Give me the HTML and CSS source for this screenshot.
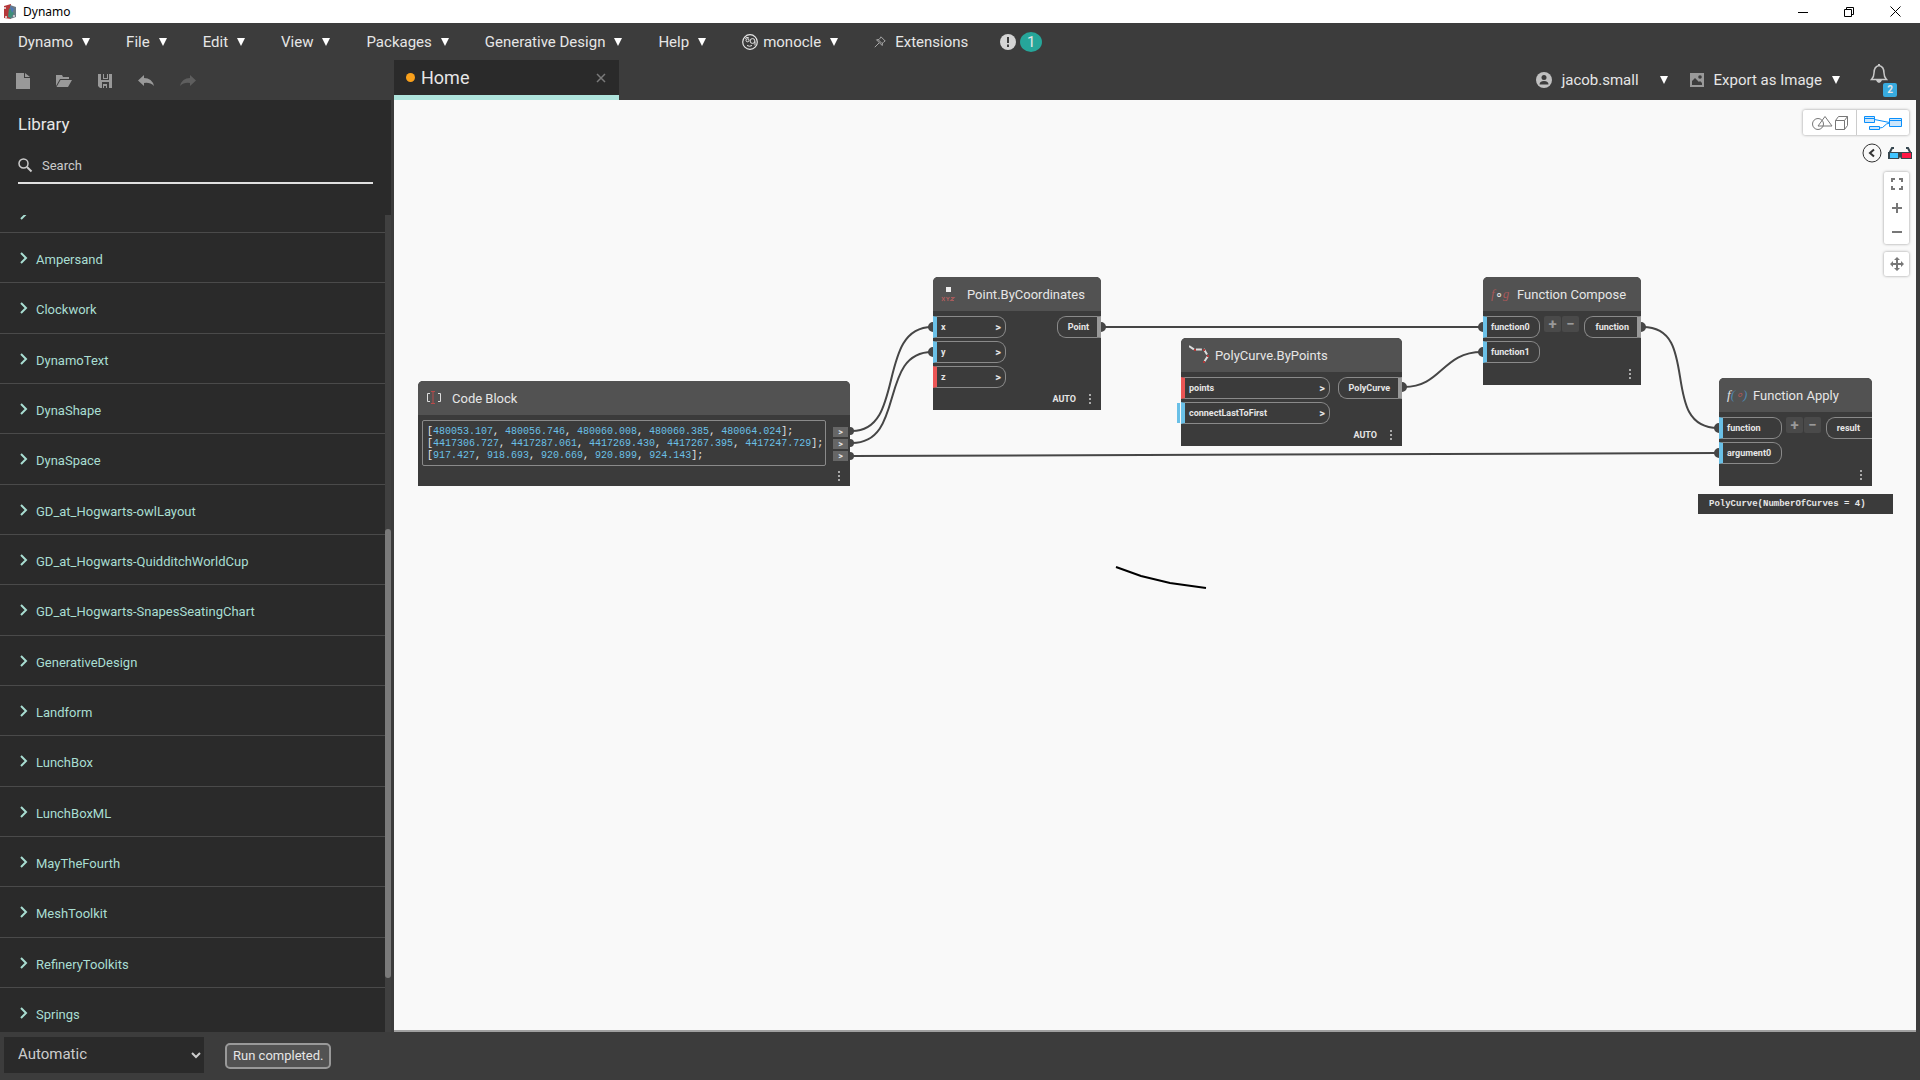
FILE: index.html
```html
<!DOCTYPE html>
<html lang="en">
<head>
  <meta charset="UTF-8">
  <meta name="viewport" content="width=device-width, initial-scale=1.0">
  <title>Dynamo</title>
  <link rel="stylesheet" href="styles.css">
</head>
<body>
  <header class="titlebar">
    <svg class="app-icon" width="14" height="18" viewBox="0 0 14 18">
      <path d="M1 3 8 1v15l-7-1z" fill="#b5383a"/>
      <path d="M7 2l6 2v10l-6 2z" fill="#6c7a86"/>
      <path d="M6 5l5 5-3 5-3-1z" fill="#3f8f7a"/>
      <path d="M7 3l4 3-2 4z" fill="#4b78b8"/>
      <circle cx="2" cy="5" r="1" fill="#eee"/>
      <circle cx="3" cy="14" r="1" fill="#eee"/>
      <circle cx="11" cy="13" r="1" fill="#ddd"/>
    </svg>
    <span class="app-name">Dynamo</span>
    <div class="window-buttons">
      <button aria-label="Minimize"><svg width="10" height="10"><path d="M0 5.5h10" stroke="#000"/></svg></button>
      <button aria-label="Restore"><svg width="10" height="10" fill="none" stroke="#000"><path d="M.5 2.500h7v7h-7zM2.500 2.500v-2h7v7h-2"/></svg></button>
      <button aria-label="Close"><svg width="11" height="11"><path d="M.5.5l10 10M10.500.5l-10 10" stroke="#000"/></svg></button>
    </div>
  </header>

  <nav class="menubar">
    <button class="menu">Dynamo <i class="arrow"></i></button>
    <button class="menu">File <i class="arrow"></i></button>
    <button class="menu">Edit <i class="arrow"></i></button>
    <button class="menu">View <i class="arrow"></i></button>
    <button class="menu">Packages <i class="arrow"></i></button>
    <button class="menu">Generative Design <i class="arrow"></i></button>
    <button class="menu">Help <i class="arrow"></i></button>
    <button class="menu with-icon">
      <svg width="16" height="16" viewBox="0 0 16 16" fill="none" stroke="#e6e6e6">
        <circle cx="8" cy="8" r="7.300" stroke-width="1.200"/>
        <circle cx="5.500" cy="6.300" r="1.500"/>
        <circle cx="10.500" cy="7" r="2.400"/>
        <path d="M3 4.500q2-2 4-.5M13 7.500v4M5 11.500q2.500 1.500 5 0"/>
      </svg>
      monocle <i class="arrow"></i>
    </button>
    <button class="menu extensions">
      <svg width="12" height="12" viewBox="0 0 12 12" fill="none" stroke="#b4b4b4" stroke-width=".9">
        <path d="M7 .8 11.200 5l-1.200.6-1.500 1.500-.3 2.400L2.500 3.800l2.400-.3L6.400 2zM5 7 .8 11.200M4.500 4l3.500 3.500"/>
      </svg>
      Extensions
    </button>
    <div class="alerts">
      <svg width="16" height="16" viewBox="0 0 16 16"><circle cx="8" cy="8" r="8" fill="#d4d4d4"/><path d="M8 3v6M8 10.500v2.500" stroke="#3c3c3c" stroke-width="2"/></svg>
      <span class="count">1</span>
    </div>
  </nav>

  <div class="toolbar">
    <div class="file-tools">
      <button aria-label="New"><svg width="14" height="16" viewBox="0 0 14 16"><path d="M0 0h8v5h6v11H0zM9 0l5 4H9z" fill="#999"/></svg></button>
      <button aria-label="Open"><svg width="16" height="14" viewBox="0 0 16 14"><path d="M0 1h6l1 2h6v2H4L0 12zM4.500 6H16l-4 7H.5z" fill="#999"/></svg></button>
      <button aria-label="Save"><svg width="14" height="14" viewBox="0 0 14 14"><path d="M0 0h3v6h8V0h3v14h-3V8H4v6H2l-2-2zM5 0h1v4h3V0h1v5H5zM5 10h4v4H8v-2H6v2H5z" fill="#999"/></svg></button>
      <button aria-label="Undo"><svg width="16" height="12" viewBox="0 0 16 12"><path d="M6 0v3q8 0 10 8-4-4-10-3v3L0 5.500z" fill="#999"/></svg></button>
      <button aria-label="Redo"><svg width="16" height="12" viewBox="0 0 16 12"><path d="M10 0v3Q2 3 0 11q4-4 10-3v3l6-5.500z" fill="#5e5e5e"/></svg></button>
    </div>
    <div class="tab">
      <span class="unsaved"></span>
      <span class="tab-name">Home</span>
      <button class="tab-close" aria-label="Close tab"><svg width="10" height="10"><path d="M1 1l8 8M9 1l-8 8" stroke="#7a7a7a" stroke-width="1.500"/></svg></button>
    </div>
    <div class="account">
      <button class="user">
        <svg width="16" height="16" viewBox="0 0 16 16"><circle cx="8" cy="8" r="8" fill="#c0c0c0"/><circle cx="8" cy="5.500" r="2.500" fill="#3c3c3c"/><path d="M3.500 12.500q0-3.500 4.500-3.500t4.500 3.500z" fill="#3c3c3c"/></svg>
        jacob.small <i class="arrow"></i>
      </button>
      <button class="export">
        <svg width="14" height="14" viewBox="0 0 14 14"><path d="M0 0h14v14H0z" fill="#999"/><circle cx="10" cy="4" r="1.800" fill="#3c3c3c"/><path d="M2 12V8l3-3 4 4 1-1 2 2v2z" fill="#3c3c3c"/></svg>
        Export as Image <i class="arrow"></i>
      </button>
      <button class="bell" aria-label="Notifications">
        <svg width="18" height="20" viewBox="0 0 18 20"><path d="M9 1.500q5 1 5 7.500 0 4 2.500 6.500h-15Q4 13 4 9q0-6.500 5-7.500z" fill="none" stroke="#c8c8c8" stroke-width="1.500"/><path d="M8 0h2v2H8zM6 16h6q-1 3-3 3t-3-3z" fill="#c8c8c8"/></svg>
        <span class="notice">2</span>
      </button>
    </div>
  </div>

  <main class="workspace">
    <aside class="library">
      <h2>Library</h2>
      <label class="search">
        <svg width="15" height="15" viewBox="0 0 15 15" fill="none" stroke="#ccc" stroke-width="1.500"><circle cx="5.500" cy="5.500" r="4.500"/><path d="M9 9l4.500 4.500" stroke-width="2"/></svg>
        <input type="text" placeholder="Search" aria-label="Search">
      </label>
      <div class="browser">
        <ul class="packages">
          <li class="partial"><button aria-label="Expand"><svg width="8" height="12"><path d="M1 1l5 5-5 5"/></svg></button></li>
          <li><button><svg width="8" height="12"><path d="M1 1l5 5-5 5"/></svg><span>Ampersand</span></button></li>
          <li><button><svg width="8" height="12"><path d="M1 1l5 5-5 5"/></svg><span>Clockwork</span></button></li>
          <li><button><svg width="8" height="12"><path d="M1 1l5 5-5 5"/></svg><span>DynamoText</span></button></li>
          <li><button><svg width="8" height="12"><path d="M1 1l5 5-5 5"/></svg><span>DynaShape</span></button></li>
          <li><button><svg width="8" height="12"><path d="M1 1l5 5-5 5"/></svg><span>DynaSpace</span></button></li>
          <li><button><svg width="8" height="12"><path d="M1 1l5 5-5 5"/></svg><span>GD_at_Hogwarts-owlLayout</span></button></li>
          <li><button><svg width="8" height="12"><path d="M1 1l5 5-5 5"/></svg><span>GD_at_Hogwarts-QuidditchWorldCup</span></button></li>
          <li><button><svg width="8" height="12"><path d="M1 1l5 5-5 5"/></svg><span>GD_at_Hogwarts-SnapesSeatingChart</span></button></li>
          <li><button><svg width="8" height="12"><path d="M1 1l5 5-5 5"/></svg><span>GenerativeDesign</span></button></li>
          <li><button><svg width="8" height="12"><path d="M1 1l5 5-5 5"/></svg><span>Landform</span></button></li>
          <li><button><svg width="8" height="12"><path d="M1 1l5 5-5 5"/></svg><span>LunchBox</span></button></li>
          <li><button><svg width="8" height="12"><path d="M1 1l5 5-5 5"/></svg><span>LunchBoxML</span></button></li>
          <li><button><svg width="8" height="12"><path d="M1 1l5 5-5 5"/></svg><span>MayTheFourth</span></button></li>
          <li><button><svg width="8" height="12"><path d="M1 1l5 5-5 5"/></svg><span>MeshToolkit</span></button></li>
          <li><button><svg width="8" height="12"><path d="M1 1l5 5-5 5"/></svg><span>RefineryToolkits</span></button></li>
          <li><button><svg width="8" height="12"><path d="M1 1l5 5-5 5"/></svg><span>Springs</span></button></li>
        </ul>
        <div class="scrollbar"><div class="thumb"></div></div>
      </div>
    </aside>

    <section class="canvas">
      <!-- wires -->
      <svg class="wires" width="1500" height="500" fill="none" stroke="#464646" stroke-width="2">
        <path d="M458 331C512 331 482 227 538 227"/>
        <path d="M458 343C512 343 484 252 538 252"/>
        <path d="M458 356L1324 353"/>
        <path d="M709 227H1088"/>
        <path d="M1010 287C1048 287 1048 252 1088 252"/>
        <path d="M1249 227C1308 227 1264 328 1324 328"/>
        <path d="M722 467L747 476 776 483 812 488" stroke="#000"/>
        <g fill="#464646" stroke="none">
          <path d="M456 327a4 4 0 010 8zM456 339a4 4 0 010 8zM456 352a4 4 0 010 8zM707 222a5 5 0 010 10zM1008 282a5 5 0 010 10zM1247 222a5 5 0 010 10z"/>
          <path d="M539 222a5 5 0 000 10zM539 247a5 5 0 000 10zM1089 222a5 5 0 000 10zM1089 247a5 5 0 000 10zM1325 323a5 5 0 000 10zM1325 348a5 5 0 000 10z"/>
        </g>
      </svg>

      <article class="node code-block">
        <h3>
          <svg width="20" height="14" viewBox="0 0 20 14" fill="none" stroke="#ddd"><path d="M4 2.500H1.500v8H4M12 2.500h2.500v8H12"/><path d="M5 .5h4M5 12.500h4M7 1v11" stroke="#b94a4a"/></svg>
          Code Block
        </h3>
        <div class="code-body">
          <div class="code">
            <div>[<b>480053.107</b>, <b>480056.746</b>, <b>480060.008</b>, <b>480060.385</b>, <b>480064.024</b>];</div>
            <div>[<b>4417306.727</b>, <b>4417287.061</b>, <b>4417269.430</b>, <b>4417267.395</b>, <b>4417247.729</b>];</div>
            <div>[<b>917.427</b>, <b>918.693</b>, <b>920.669</b>, <b>920.899</b>, <b>924.143</b>];</div>
          </div>
          <div class="code-ports"><span>&gt;</span><span>&gt;</span><span>&gt;</span></div>
        </div>
        <footer><i class="dots"></i></footer>
      </article>

      <article class="node point">
        <h3>
          <svg width="20" height="16" viewBox="0 0 20 16"><path d="M5 1h5v5H5z" fill="#eee"/><path d="M1 11l3 4M4 11l-3 4M5.500 11l1.500 2 1.500-2M7 13v2M10 11.500h3l-3 3h3" stroke="#a85c5c" stroke-width="1.200" fill="none"/></svg>
          Point.ByCoordinates
        </h3>
        <div class="ports">
          <div class="inputs">
            <span class="in">x<i>&gt;</i></span>
            <span class="in">y<i>&gt;</i></span>
            <span class="in missing">z<i>&gt;</i></span>
          </div>
          <span class="out">Point</span>
        </div>
        <footer>AUTO <i class="dots"></i></footer>
      </article>

      <article class="node polycurve">
        <h3>
          <svg width="20" height="20" viewBox="0 0 20 20"><path d="M0 1l5 3.500h10l4 6.500-4 6" fill="none" stroke="#ddd" stroke-width="2" stroke-dasharray="6 2"/><path d="M5 4h2v2H5zM14 4h2v2h-2zM18 10h2v2h-2zM14 16h2v2h-2z" fill="#b03a3a"/></svg>
          PolyCurve.ByPoints
        </h3>
        <div class="ports">
          <div class="inputs">
            <span class="in missing">points<i>&gt;</i></span>
            <span class="in default">connectLastToFirst<i>&gt;</i></span>
          </div>
          <span class="out">PolyCurve</span>
        </div>
        <footer>AUTO <i class="dots"></i></footer>
      </article>

      <article class="node compose">
        <h3><span class="fx"><em class="red">f</em>∘<em class="red">g</em></span>Function Compose</h3>
        <div class="ports">
          <div class="inputs">
            <span class="in">function0</span>
            <span class="in">function1</span>
          </div>
          <div class="adders"><button>+</button><button>−</button></div>
          <span class="out">function</span>
        </div>
        <footer><i class="dots"></i></footer>
      </article>

      <article class="node apply">
        <h3><span class="fx"><em>f</em><em class="blue">(</em><em class="red">∘</em><em class="blue">)</em></span>Function Apply</h3>
        <div class="ports">
          <div class="inputs">
            <span class="in">function</span>
            <span class="in">argument0</span>
          </div>
          <div class="adders"><button>+</button><button>−</button></div>
          <span class="out open">result</span>
        </div>
        <footer><i class="dots"></i></footer>
      </article>
      <div class="preview">PolyCurve(NumberOfCurves = 4)</div>

      <!-- view controls -->
      <div class="controls">
        <div class="view-switch">
          <button aria-label="Geometry view"><svg width="38" height="16" viewBox="0 0 38 16" fill="none" stroke="#777"><circle cx="7" cy="9" r="5.500"/><path d="M14 1.500l7 9.500H7zM24.500 5.500h9v9h-9zM24.500 5.500l3-4h9v9l-3 4M33.500 5.500l3-4"/></svg></button>
          <button aria-label="Graph view"><svg width="38" height="16" viewBox="0 0 38 16" fill="#cde6fb" stroke="#0a8ffb"><path d="M.5 1.500h10v6H.5zM.5 3.500h10M5.500 11.500h10v3h-10zM25.500 3.500h12v8h-12zM25.500 5.500h12"/><path d="M10.500 4.500l15 3M15.500 13l3-.5 4-3.500 3-1" fill="none"/></svg></button>
        </div>
        <div class="viewer">
          <button aria-label="Collapse"><svg width="20" height="20" viewBox="0 0 20 20" fill="none" stroke="#333"><circle cx="10" cy="10" r="9"/><path d="M12 6.500L8 10l4 3.500" stroke-width="2"/></svg></button>
          <button aria-label="3D glasses"><svg width="24" height="14" viewBox="0 0 24 14"><path d="M1 8l3-6h2M23 8l-3-6h-2" fill="none" stroke="#37474f" stroke-width="2"/><path d="M0 6h24v7H13l-1-2-1 2H0z" fill="#37474f"/><path d="M2 7h8v5H2z" fill="#40c4ff"/><path d="M14 7h9v5h-9z" fill="#ff1744"/></svg></button>
        </div>
        <div class="zoom">
          <button aria-label="Fit"><svg width="12" height="12"><path d="M1 4V1h3M8 1h3v3M11 8v3H8M4 11H1V8" fill="none" stroke="#777" stroke-width="2"/></svg></button>
          <button aria-label="Zoom in"><svg width="10" height="10"><path d="M5 0v10M0 5h10" stroke="#777" stroke-width="2"/></svg></button>
          <button aria-label="Zoom out"><svg width="10" height="10"><path d="M0 5h10" stroke="#777" stroke-width="2"/></svg></button>
        </div>
        <div class="pan">
          <button aria-label="Pan"><svg width="14" height="14" viewBox="0 0 14 14"><path d="M7 2v10M2 7h10" stroke="#777" stroke-width="2"/><path d="M7 0l3 3H4zM7 14l3-3H4zM0 7l3-3v6zM14 7l-3-3v6z" fill="#777"/></svg></button>
        </div>
      </div>
    </section>
  </main>

  <footer class="statusbar">
    <select aria-label="Run mode">
      <option>Automatic</option>
      <option>Manual</option>
    </select>
    <span class="status">Run completed.</span>
  </footer>
</body>
</html>
```
FILE: styles.css
```css
* {
  box-sizing: border-box;
}

body {
  margin: 0;
  height: 100vh;
  display: flex;
  flex-direction: column;
  overflow: hidden;
  font-family: Roboto, "Liberation Sans", sans-serif;
  font-size: 15px;
  color: #e6e6e6;
  background: #3c3c3c;
}

button {
  display: flex;
  align-items: center;
  justify-content: center;
  padding: 0;
  border: none;
  background: none;
  font: inherit;
  color: inherit;
}

svg {
  flex: none;
}

.arrow {
  width: 0;
  border: 4px solid transparent;
  border-top: 8px solid #fff;
  border-bottom: none;
}

/* title bar */
.titlebar {
  display: flex;
  align-items: center;
  height: 23px;
  flex: none;
  padding-left: 3px;
  background: #fff;
  color: #000;
}

.app-name {
  margin-left: 6px;
  font-family: "Noto Sans", sans-serif;
  font-size: 12px;
}

.window-buttons {
  display: flex;
  margin-left: auto;
  padding-right: 2px;
}

.window-buttons button {
  width: 46px;
}

/* menu */
.menubar {
  display: flex;
  align-items: center;
  gap: 36px;
  height: 37px;
  flex: none;
  padding: 0 18px;
}

.menu {
  gap: 9px;
}

.with-icon svg {
  margin-right: -4px;
}

.alerts {
  display: flex;
  align-items: center;
  gap: 4px;
  margin-left: -4px;
}

.count {
  width: 22px;
  border-radius: 50%;
  background: #26a69a;
  line-height: 20px;
  text-align: center;
}

/* toolbar */
.toolbar {
  display: flex;
  height: 40px;
  flex: none;
}

.file-tools {
  display: flex;
  align-items: center;
  gap: 26px;
  width: 394px;
  flex: none;
  padding: 2px 0 0 16px;
}

.tab {
  display: flex;
  align-items: center;
  width: 225px;
  padding: 0 13px 0 12px;
  background: #2a2a2a;
  border-bottom: 5px solid #aee3dc;
  font-size: 18px;
}

.unsaved {
  width: 9px;
  height: 9px;
  margin-right: 6px;
  border-radius: 50%;
  background: #f9a01b;
}

.tab-close {
  margin-left: auto;
}

.account {
  display: flex;
  margin-left: auto;
  padding-right: 32px;
}

.user {
  gap: 10px;
  margin-right: 22px;
}

.user .arrow {
  margin-left: 11px;
}

.export {
  gap: 10px;
  margin-right: 30px;
}

.bell {
  position: relative;
  align-items: flex-start;
  padding-top: 4px;
}

.notice {
  position: absolute;
  left: 13px;
  top: 23px;
  width: 14px;
  border-radius: 2px;
  background: #38abdf;
  font-size: 10px;
  font-weight: bold;
  line-height: 14px;
}

/* main area */
.workspace {
  display: flex;
  flex: 1;
  min-height: 0;
}

.library {
  display: flex;
  flex-direction: column;
  width: 394px;
  flex: none;
  border-right: 3px solid #3c3c3c;
  background: #2a2a2a;
}

.library h2 {
  margin: 0;
  padding: 13px 18px 0;
  font-size: 17px;
  font-weight: normal;
  line-height: 22px;
}

.search {
  display: flex;
  align-items: center;
  gap: 9px;
  height: 36px;
  margin: 13px 18px 31px;
  border-bottom: 2px solid #e0e0e0;
}

.search input {
  flex: 1;
  padding: 0;
  border: none;
  outline: none;
  background: none;
  font: inherit;
  font-size: 13px;
}

.search input::placeholder {
  color: #ccc;
}

.browser {
  display: flex;
  flex: 1;
  min-height: 0;
}

.packages {
  flex: 1;
  margin: 0;
  padding: 0;
  overflow: hidden;
  list-style: none;
  font-size: 13px;
  color: #a9ded2;
}

.packages li {
  display: flex;
  height: 50px;
  border-bottom: 1px solid #4a4a4a;
}

.packages li:nth-child(3n) {
  height: 51px;
}

.packages button {
  flex: 1;
  justify-content: flex-start;
  gap: 8px;
  padding-left: 20px;
}

.packages li.partial {
  height: 18px;
}

.partial button {
  align-items: flex-start;
}

.partial svg {
  margin-top: -7px;
}

.packages span {
  padding-top: 3px;
}

.packages path {
  fill: none;
  stroke: #a9ded2;
  stroke-width: 2;
}

.scrollbar {
  display: flex;
  flex-direction: column;
  width: 6px;
  background: #404040;
}

.thumb {
  height: 55%;
  margin-top: 314px;
  border-radius: 3px;
  background: #7a7a7a;
}

.canvas {
  position: relative;
  flex: 1;
  margin-right: 4px;
  border-bottom: 2px solid #a0a0a0;
  overflow: hidden;
  background: #f9f9f9;
}

.wires {
  position: absolute;
  left: 0;
  top: 0;
}

/* nodes */
.node {
  position: absolute;
  border-radius: 5px 5px 0 0;
  background: #3b3b3b;
  font-size: 9px;
  font-weight: bold;
}

.node h3 {
  display: flex;
  align-items: center;
  gap: 6px;
  height: 34px;
  margin: 0;
  padding-left: 8px;
  border-radius: 5px 5px 0 0;
  background: #525252;
  font-size: 13px;
  font-weight: normal;
  white-space: nowrap;
}

.code-block {
  left: 24px;
  top: 281px;
  width: 432px;
}

.point {
  left: 539px;
  top: 177px;
  width: 168px;
}

.polycurve {
  left: 787px;
  top: 238px;
  width: 221px;
}

.compose {
  left: 1089px;
  top: 177px;
  width: 158px;
}

.apply {
  left: 1325px;
  top: 278px;
  width: 153px;
}

.code-body {
  display: flex;
  justify-content: space-between;
  padding: 5px 2px 0 4px;
}

.code {
  width: 404px;
  padding: 5px 4px 3px;
  border: 1px solid #8a8a8a;
  border-radius: 2px;
  font-family: "Liberation Mono", monospace;
  font-size: 10px;
  font-weight: normal;
  line-height: 12px;
  white-space: nowrap;
}

.code b {
  font-weight: normal;
  color: #6ac0e7;
}

.code-ports {
  display: flex;
  flex-direction: column;
  gap: 2px;
  padding-top: 7px;
}

.code-ports span {
  width: 15px;
  background: #666;
  line-height: 10px;
  text-align: center;
}

.ports {
  display: flex;
  align-items: flex-start;
  padding-top: 5px;
}

.inputs {
  display: flex;
  flex-direction: column;
  gap: 3px;
}

.in,
.out {
  display: flex;
  align-items: center;
  height: 22px;
  border: 1px solid #8a8a8a;
}

.in {
  justify-content: space-between;
  padding: 0 4px;
  border-left: 4px solid #6ac0e7;
  border-radius: 0 9px 9px 0;
}

.in i {
  font-size: 11px;
  font-style: normal;
}

.in.missing {
  border-left-color: #eb5555;
}

.in.default {
  position: relative;
}

.in.default::before {
  content: "";
  position: absolute;
  left: -8px;
  top: 0;
  width: 3px;
  height: 20px;
  background: #6ac0e7;
}

.out {
  margin-left: auto;
  padding: 0 8px 0 10px;
  border-right: 4px solid #999;
  border-radius: 9px 0 0 9px;
}

.out.open {
  padding-right: 12px;
  border-right: none;
}

.point .inputs {
  width: 73px;
}

.polycurve .inputs {
  width: 149px;
}

.compose .inputs {
  width: 57px;
}

.apply .inputs {
  width: 63px;
}

.adders {
  display: flex;
  gap: 1px;
  margin-left: 4px;
}

.adders button {
  width: 17px;
  height: 16px;
  border-radius: 2px;
  background: #4a4a4a;
  font-size: 15px;
  color: #999;
}

.node footer {
  display: flex;
  align-items: center;
  justify-content: flex-end;
  gap: 13px;
  height: 22px;
  padding-right: 10px;
}

.code-block footer {
  height: 20px;
}

.dots {
  width: 2px;
  height: 10px;
  background: repeating-linear-gradient(#aaa 0 2px, transparent 2px 4px);
}

.node h3 .fx {
  width: 20px;
  font-family: "Liberation Serif", serif;
  font-size: 13px;
}

.fx .red {
  color: #a85858;
}

.fx .blue {
  color: #4f88b0;
}

.preview {
  position: absolute;
  left: 1304px;
  top: 394px;
  width: 195px;
  padding-left: 11px;
  background: #3b3b3b;
  font-family: "Liberation Mono", monospace;
  font-size: 9px;
  font-weight: bold;
  line-height: 20px;
}

/* controls over the canvas */
.controls {
  position: absolute;
  top: 10px;
  right: 7px;
  display: flex;
  flex-direction: column;
  align-items: flex-end;
}

.view-switch,
.zoom,
.pan {
  display: flex;
  border-radius: 2px;
  background: #fff;
  box-shadow: 0 0 3px rgba(0, 0, 0, 0.4);
}

.view-switch button {
  width: 53px;
  height: 25px;
}

.view-switch button + button {
  border-left: 1px solid #ccc;
}

.viewer {
  display: flex;
  gap: 6px;
  margin: 8px -3px 9px 0;
}

.zoom {
  flex-direction: column;
  margin-bottom: 8px;
}

.zoom button,
.pan button {
  width: 25px;
  height: 24px;
}

/* status bar */
.statusbar {
  display: flex;
  align-items: flex-start;
  gap: 21px;
  height: 48px;
  flex: none;
  padding: 5px 4px;
}

.statusbar select {
  width: 200px;
  height: 36px;
  padding: 0 10px 2px;
  border: none;
  background: #2a2a2a;
  font: inherit;
  color: #ccc;
}

.status {
  margin-top: 6px;
  padding: 0 6px 1px;
  border: 2px solid #999;
  border-radius: 5px;
  background: #525252;
  font-size: 13px;
  line-height: 21px;
}
```
